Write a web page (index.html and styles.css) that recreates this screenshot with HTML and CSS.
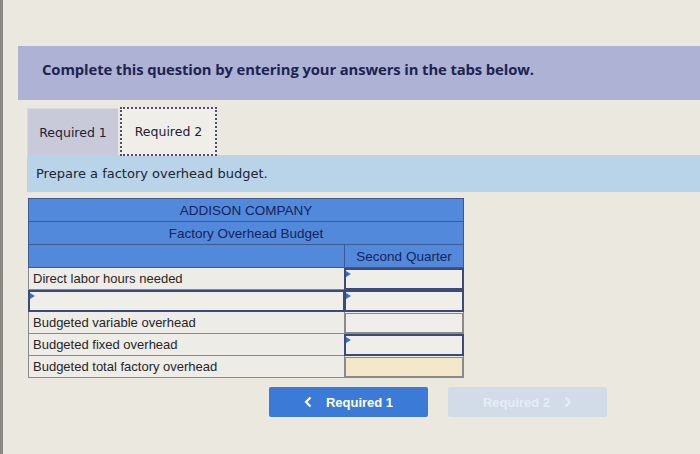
FILE: index.html
```html
<!DOCTYPE html>
<html>
<head>
<meta charset="utf-8">
<link rel="stylesheet" href="styles.css">
</head>
<body>
<div class="screen">
  <div class="banner">Complete this question by entering your answers in the tabs below.</div>
  <div class="content">
    <div class="tabs">
      <div class="tab tab-inactive">Required 1</div>
      <div class="tab tab-active">Required 2</div>
    </div>
    <div class="prompt">Prepare a factory overhead budget.</div>
    <table class="budget">
      <tr class="head"><td colspan="2" class="title">ADDISON COMPANY</td></tr>
      <tr class="head"><td colspan="2" class="title">Factory Overhead Budget</td></tr>
      <tr class="head"><td class="c1"></td><td class="c2 qtr">Second Quarter</td></tr>
      <tr><td class="c1">Direct labor hours needed</td><td class="c2"><div class="inp dark mark"></div></td></tr>
      <tr><td class="c1 holder"><div class="inp dark mark wide"></div></td><td class="c2"><div class="inp dark mark"></div></td></tr>
      <tr><td class="c1">Budgeted variable overhead</td><td class="c2"><div class="inp"></div></td></tr>
      <tr><td class="c1">Budgeted fixed overhead</td><td class="c2"><div class="inp dark mark"></div></td></tr>
      <tr><td class="c1">Budgeted total factory overhead</td><td class="c2"><div class="inp yellow"></div></td></tr>
    </table>
    <div class="nav">
      <div class="btn btn-prev"><svg class="chev" width="8" height="12" viewBox="0 0 8 12"><path d="M6.5 1.5 L2 6 L6.5 10.5" fill="none" stroke="#ffffff" stroke-width="2.2"/></svg>Required 1</div>
      <div class="btn btn-next">Required 2<svg class="chev chev-r" width="8" height="12" viewBox="0 0 8 12"><path d="M1.5 1.5 L6 6 L1.5 10.5" fill="none" stroke="#e6edf5" stroke-width="2.2"/></svg></div>
    </div>
  </div>
</div>
</body>
</html>
```
FILE: styles.css
```css
html, body {
  margin: 0;
  padding: 0;
}
body {
  width: 700px;
  height: 454px;
  overflow: hidden;
  background: #ebe8e0;
}
.screen {
  height: 454px;
  border-left: 3px solid #8c8883;
  padding-top: 46px;
  box-sizing: border-box;
}
.banner {
  margin-left: 15px;
  height: 54px;
  background: #aeb2d4;
  color: #1d2352;
  font-family: "Open Sans", sans-serif;
  font-weight: bold;
  font-size: 14.8px;
  line-height: 47px;
  padding-left: 24px;
  letter-spacing: -0.1px;
}
.content {
  padding-left: 24px;
  padding-top: 8px;
}
.tabs {
  display: flex;
  align-items: flex-start;
  gap: 2px;
}
.tab {
  font-family: "DejaVu Sans", sans-serif;
  font-size: 12.5px;
  color: #1d2235;
  box-sizing: border-box;
  display: flex;
  align-items: center;
  justify-content: center;
}
.tab-inactive {
  width: 91px;
  height: 47px;
  background: #c8c9d9;
  border-top: 1px solid #d8d8de;
  border-left: 1px solid #d8d8de;
}
.tab-active {
  width: 97px;
  height: 49px;
  background: #efeee9;
  border: 2px dotted #4b4f6a;
  margin-top: -1px;
  margin-bottom: -2px;
  position: relative;
}
.prompt {
  height: 37px;
  background: #b9d4e8;
  font-family: "DejaVu Sans", sans-serif;
  font-size: 13px;
  color: #20252e;
  line-height: 38px;
  padding-left: 9px;
}
.budget {
  margin-top: 6px;
  margin-left: 1px;
  border-collapse: collapse;
  font-family: "Liberation Sans", sans-serif;
  font-size: 13px;
  color: #262626;
}
.budget td {
  padding: 0;
  height: 21px;
  border: 1px solid #8a8a8a;
}
.head td {
  background: #5389da;
  border-color: #3c5b92;
  color: #13245a;
  font-size: 13.5px;
  height: 22px;
}
.title {
  text-align: center;
}
.qtr {
  text-align: center;
}
.c1 {
  width: 316px;
  padding-left: 4px !important;
  box-sizing: border-box;
  background: #eeece6;
}
.c2 {
  width: 118px;
  background: #eeece6;
  padding: 0 !important;
}
.holder {
  padding: 0 !important;
}
.inp {
  height: 20px;
  margin: 0;
  border: 1px solid #8a8a8a;
  box-sizing: border-box;
  position: relative;
  background: #f0eee8;
}
.inp.dark {
  border: 2px solid #3b4a7a;
  height: 22px;
  margin: -1px;
}
.inp.yellow {
  background: #f3e8c9;
}
.mark::before {
  content: "";
  position: absolute;
  left: 0;
  top: 1px;
  border-style: solid;
  border-width: 3px 0 3px 5px;
  border-color: transparent transparent transparent #3b6fc0;
}
.nav {
  display: flex;
  gap: 20px;
  margin-top: 9px;
  margin-left: 242px;
}
.btn {
  width: 159px;
  height: 30px;
  border-radius: 2px;
  font-family: "Liberation Sans", sans-serif;
  font-weight: bold;
  font-size: 13px;
  display: flex;
  align-items: center;
  justify-content: center;
}
.btn-prev {
  background: #3b7ad6;
  color: #ffffff;
}
.btn-next {
  background: #d2dce8;
  color: #e6edf5;
}
.chev {
  margin-right: 14px;
}
.chev-r {
  margin-right: 0;
  margin-left: 14px;
}
```
